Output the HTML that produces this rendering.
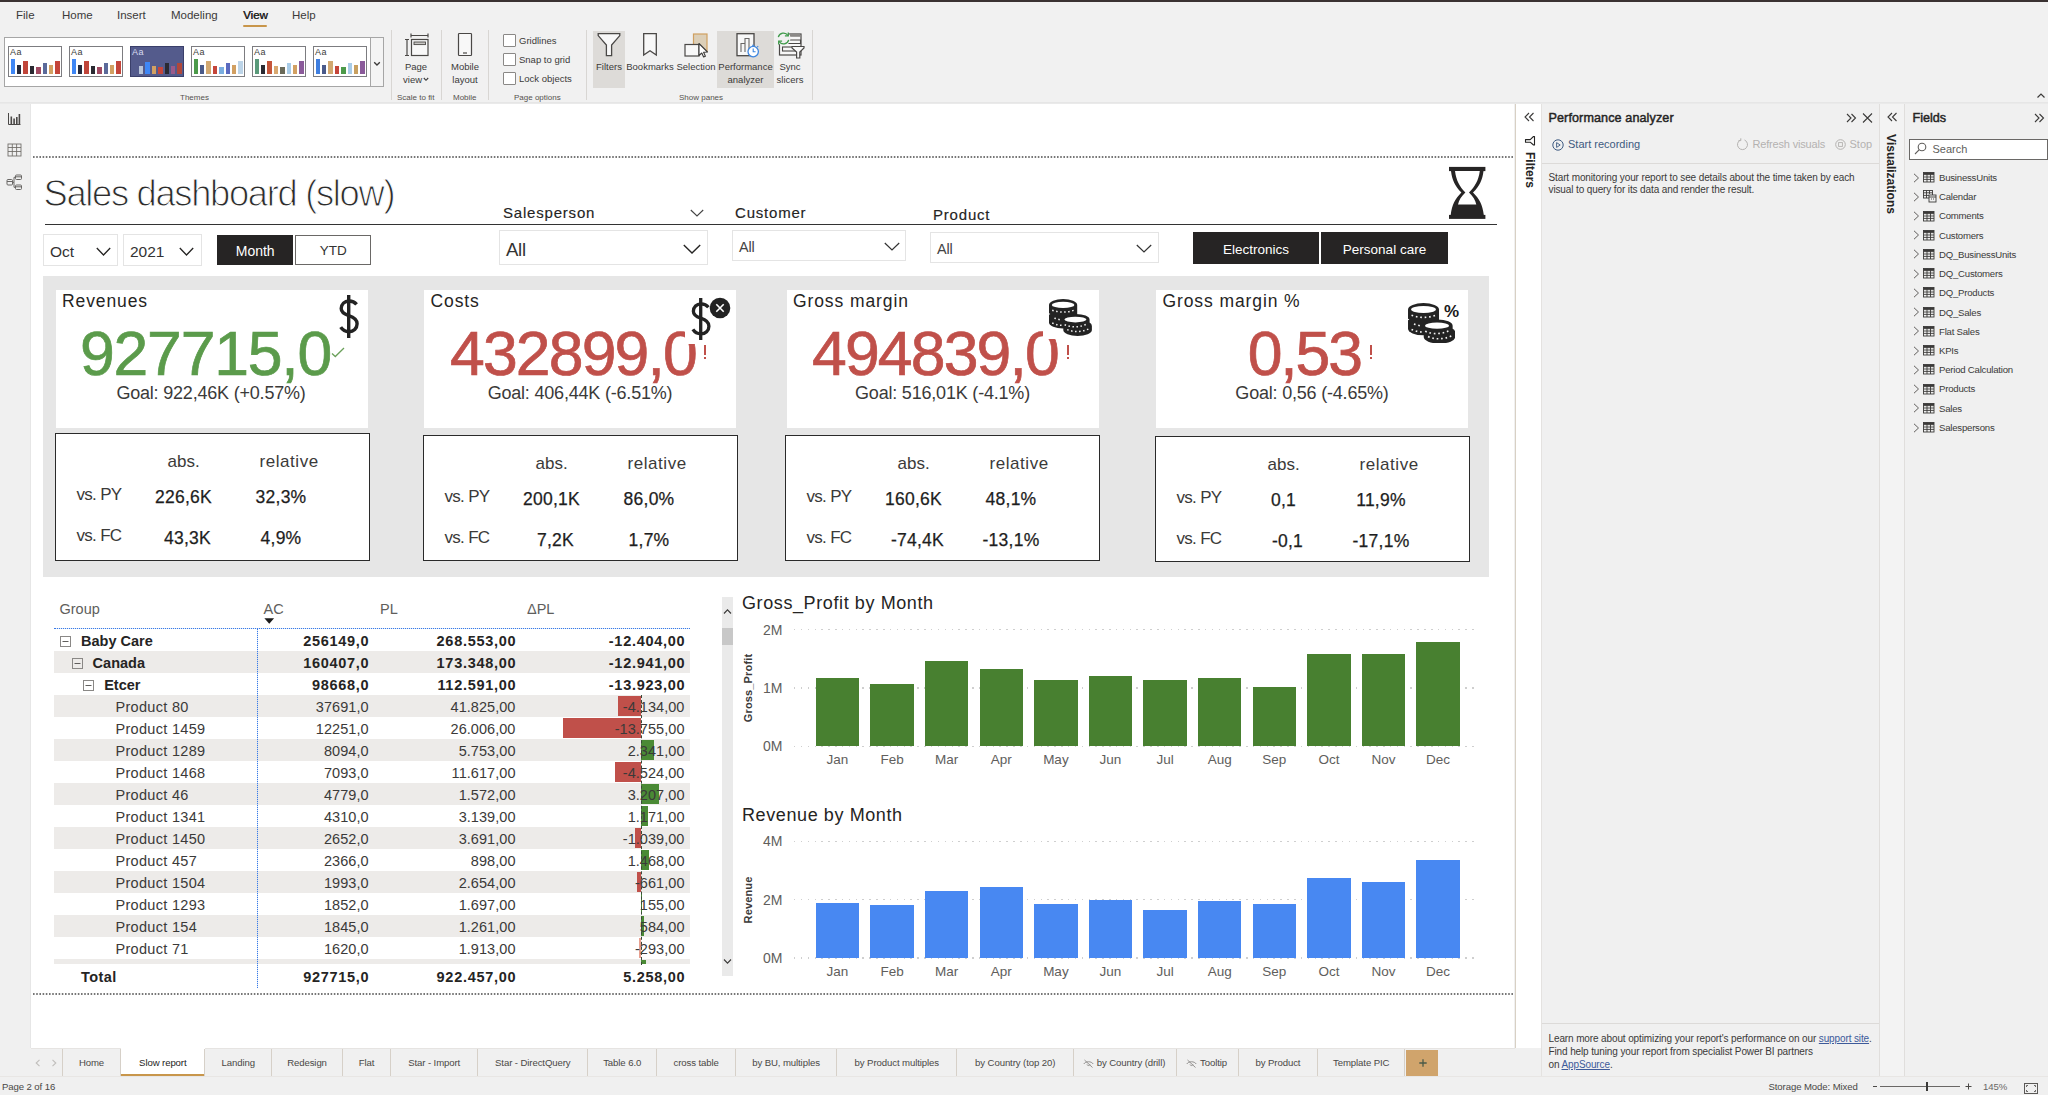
<!DOCTYPE html>
<html>
<head>
<meta charset="utf-8">
<title>Sales dashboard (slow)</title>
<style>
*{box-sizing:border-box;margin:0;padding:0}
html,body{width:2048px;height:1095px;overflow:hidden;background:#f0f0f0;font-family:"Liberation Sans",sans-serif;color:#252423}
.a{position:absolute}
.t{position:absolute;white-space:nowrap;line-height:1}
#ribbon{left:0;top:0;width:2048px;height:103px;background:#f1f1f1}
#topline{left:0;top:0;width:2048px;height:2px;background:#3a3232}
#canvas{left:31px;top:104px;width:1485px;height:944px;background:#fff}
#rightp{left:1514px;top:104px;width:534px;height:973px;background:#f0f0f0}
#tabs{left:31px;top:1048px;width:1483px;height:29px;background:#f0f0f0}
#status{left:0;top:1077px;width:2048px;height:18px;background:#f0f0f0}
.menu{top:9.7px;font-size:11.5px;color:#3b3a39}
.rl{font-size:8px;color:#55524f;top:94px}
.rb{font-size:9px;color:#3b3a39;text-align:center;line-height:13px}
.sep{width:1px;background:#d8d6d3;top:30px;height:70px}
.dot-h{height:0;border-top:2px dotted #8a8886}
</style>
</head>
<body>
<div class="a" id="ribbon"></div>
<div class="a" id="topline"></div>
<div class="a" id="canvas"></div>
<div class="a" id="rightp"></div>
<div class="a" id="tabs"></div>
<div class="a" id="status"></div>
<div class="t menu" style="left:16px">File</div>
<div class="t menu" style="left:62px">Home</div>
<div class="t menu" style="left:117px">Insert</div>
<div class="t menu" style="left:171px">Modeling</div>
<div class="t menu" style="left:243px;color:#252423;text-shadow:0.4px 0 0 #252423">View</div>
<div class="t menu" style="left:292px">Help</div>
<div class="a" style="left:243px;top:25px;width:24px;height:2px;background:#c8964b;border-radius:1px"></div>
<div class="a" style="left:4px;top:37px;width:380px;height:50px;background:#fff;border:1px solid #a6a6a6"></div>
<div class="a" style="left:370px;top:37px;width:14px;height:50px;background:#f4f4f4;border:1px solid #a6a6a6"></div>
<svg class="a" style="left:373px;top:61px" width="8" height="6" viewBox="0 0 8 6"><path d="M1.2 1.2 L4 4 L6.8 1.2" fill="none" stroke="#3b3a39" stroke-width="1.3"/></svg>
<div class="a" style="left:8px;top:46px;width:54px;height:31px;background:#fff;border:1px solid #7c7c80"></div>
<div class="t" style="left:10px;top:48px;font-size:9px;letter-spacing:0.4px;color:#3b3a39">Aa</div>
<div class="a" style="left:10.5px;top:58.5px;width:4.5px;height:15px;background:#3f87f5"></div>
<div class="a" style="left:16.9px;top:64.5px;width:4.5px;height:9px;background:#262a3c"></div>
<div class="a" style="left:23.3px;top:60.5px;width:4.5px;height:13px;background:#c0453a"></div>
<div class="a" style="left:29.7px;top:65.5px;width:4.5px;height:8px;background:#2a2a32"></div>
<div class="a" style="left:36.1px;top:66.5px;width:4.5px;height:7px;background:#a04a62"></div>
<div class="a" style="left:42.5px;top:62.5px;width:4.5px;height:11px;background:#5b6a9a"></div>
<div class="a" style="left:48.9px;top:64.5px;width:4.5px;height:9px;background:#d2a062"></div>
<div class="a" style="left:55.3px;top:60.5px;width:4.5px;height:13px;background:#c4453a"></div>
<div class="a" style="left:69px;top:46px;width:54px;height:31px;background:#fff;border:1px solid #7c7c80"></div>
<div class="t" style="left:71px;top:48px;font-size:9px;letter-spacing:0.4px;color:#3b3a39">Aa</div>
<div class="a" style="left:71.5px;top:58.5px;width:4.5px;height:15px;background:#3f87f5"></div>
<div class="a" style="left:77.9px;top:64.5px;width:4.5px;height:9px;background:#262a3c"></div>
<div class="a" style="left:84.3px;top:60.5px;width:4.5px;height:13px;background:#c0453a"></div>
<div class="a" style="left:90.7px;top:65.5px;width:4.5px;height:8px;background:#2a2a32"></div>
<div class="a" style="left:97.1px;top:66.5px;width:4.5px;height:7px;background:#a04a62"></div>
<div class="a" style="left:103.5px;top:62.5px;width:4.5px;height:11px;background:#5b6a9a"></div>
<div class="a" style="left:109.9px;top:64.5px;width:4.5px;height:9px;background:#d2a062"></div>
<div class="a" style="left:116.3px;top:60.5px;width:4.5px;height:13px;background:#c4453a"></div>
<div class="a" style="left:130px;top:46px;width:54px;height:31px;background:#545b8c;border:1px solid #3a3f6a"></div>
<div class="t" style="left:132px;top:48px;font-size:9px;letter-spacing:0.4px;color:#d8dcf0">Aa</div>
<div class="a" style="left:138.9px;top:65.5px;width:4.5px;height:8px;background:#b8c4d8"></div>
<div class="a" style="left:145.3px;top:61.5px;width:4.5px;height:12px;background:#3f87f5"></div>
<div class="a" style="left:151.7px;top:65.5px;width:4.5px;height:8px;background:#d2a062"></div>
<div class="a" style="left:158.1px;top:66.5px;width:4.5px;height:7px;background:#c4453a"></div>
<div class="a" style="left:164.5px;top:62.5px;width:4.5px;height:11px;background:#2a2a32"></div>
<div class="a" style="left:170.9px;top:65.5px;width:4.5px;height:8px;background:#9a5a8a"></div>
<div class="a" style="left:177.3px;top:62.5px;width:4.5px;height:11px;background:#b0483a"></div>
<div class="a" style="left:191px;top:46px;width:54px;height:31px;background:#fff;border:1px solid #7c7c80"></div>
<div class="t" style="left:193px;top:48px;font-size:9px;letter-spacing:0.4px;color:#3b3a39">Aa</div>
<div class="a" style="left:193.5px;top:58.5px;width:4.5px;height:15px;background:#4c9a4a"></div>
<div class="a" style="left:199.9px;top:64.5px;width:4.5px;height:9px;background:#4a5a8a"></div>
<div class="a" style="left:206.3px;top:60.5px;width:4.5px;height:13px;background:#d2a870"></div>
<div class="a" style="left:212.7px;top:65.5px;width:4.5px;height:8px;background:#c4453a"></div>
<div class="a" style="left:219.1px;top:66.5px;width:4.5px;height:7px;background:#7aaee0"></div>
<div class="a" style="left:225.5px;top:62.5px;width:4.5px;height:11px;background:#5b6ac0"></div>
<div class="a" style="left:231.9px;top:64.5px;width:4.5px;height:9px;background:#d2a062"></div>
<div class="a" style="left:238.3px;top:60.5px;width:4.5px;height:13px;background:#bcd4e8"></div>
<div class="a" style="left:252px;top:46px;width:54px;height:31px;background:#fff;border:1px solid #7c7c80"></div>
<div class="t" style="left:254px;top:48px;font-size:9px;letter-spacing:0.4px;color:#3b3a39">Aa</div>
<div class="a" style="left:254.5px;top:58.5px;width:4.5px;height:15px;background:#5a9a7a"></div>
<div class="a" style="left:260.9px;top:64.5px;width:4.5px;height:9px;background:#2a2a32"></div>
<div class="a" style="left:267.3px;top:60.5px;width:4.5px;height:13px;background:#c4553a"></div>
<div class="a" style="left:273.7px;top:65.5px;width:4.5px;height:8px;background:#d8a870"></div>
<div class="a" style="left:280.1px;top:66.5px;width:4.5px;height:7px;background:#6a6a5a"></div>
<div class="a" style="left:286.5px;top:62.5px;width:4.5px;height:11px;background:#a8cce8"></div>
<div class="a" style="left:292.9px;top:64.5px;width:4.5px;height:9px;background:#d2a062"></div>
<div class="a" style="left:299.3px;top:60.5px;width:4.5px;height:13px;background:#8a5a9a"></div>
<div class="a" style="left:313px;top:46px;width:54px;height:31px;background:#fff;border:1px solid #7c7c80"></div>
<div class="t" style="left:315px;top:48px;font-size:9px;letter-spacing:0.4px;color:#3b3a39">Aa</div>
<div class="a" style="left:315.5px;top:58.5px;width:4.5px;height:15px;background:#3f7fe0"></div>
<div class="a" style="left:321.9px;top:64.5px;width:4.5px;height:9px;background:#4a5a8a"></div>
<div class="a" style="left:328.3px;top:60.5px;width:4.5px;height:13px;background:#d2a870"></div>
<div class="a" style="left:334.7px;top:65.5px;width:4.5px;height:8px;background:#c4453a"></div>
<div class="a" style="left:341.1px;top:66.5px;width:4.5px;height:7px;background:#4c9a4a"></div>
<div class="a" style="left:347.5px;top:62.5px;width:4.5px;height:11px;background:#a8cce8"></div>
<div class="a" style="left:353.9px;top:64.5px;width:4.5px;height:9px;background:#c8a060"></div>
<div class="a" style="left:360.3px;top:60.5px;width:4.5px;height:13px;background:#8a5a9a"></div>
<div class="t rl" style="left:180px">Themes</div>
<div class="a sep" style="left:391px"></div>
<div class="a sep" style="left:441px"></div>
<div class="a sep" style="left:488px"></div>
<div class="a sep" style="left:586px"></div>
<div class="a sep" style="left:812px"></div>
<svg class="a" style="left:404px;top:32px" width="26" height="26" viewBox="0 0 26 26" fill="none" stroke="#4a4846" stroke-width="1.2">
<path d="M7 3.5 H24 M7 1.5 V5.5 M24 1.5 V5.5"/>
<path d="M1 7.5 H5 M1 23.5 H5 M3 7.5 V23.5"/>
<rect x="7.5" y="7.5" width="16.5" height="16" fill="#f8f8f8"/>
<rect x="10" y="10" width="11.5" height="2.6" fill="#c8c6c4" stroke-width="0.9"/>
</svg>
<div class="t rb" style="left:396px;top:60px;width:40px;font-size:9.5px">Page<br>view&#8202;<svg width="6" height="5" viewBox="0 0 6 5" style="vertical-align:1px"><path d="M0.8 1 L3 3.3 L5.2 1" fill="none" stroke="#3b3a39" stroke-width="1.1"/></svg></div>
<svg class="a" style="left:457px;top:32px" width="16" height="26" viewBox="0 0 16 26" fill="none" stroke="#4a4846" stroke-width="1.2">
<rect x="1.5" y="1.5" width="13" height="22" rx="0.8" fill="#f8f8f8"/><path d="M6 21 H10"/></svg>
<div class="t rb" style="left:445px;top:60px;width:40px;font-size:9.5px">Mobile<br>layout</div>
<div class="a" style="left:503px;top:34px;width:13px;height:13px;background:#fff;border:1px solid #8a8886;border-radius:1px"></div>
<div class="t" style="left:519px;top:36px;font-size:9.5px;color:#3b3a39">Gridlines</div>
<div class="a" style="left:503px;top:53px;width:13px;height:13px;background:#fff;border:1px solid #8a8886;border-radius:1px"></div>
<div class="t" style="left:519px;top:55px;font-size:9.5px;color:#3b3a39">Snap to grid</div>
<div class="a" style="left:503px;top:72px;width:13px;height:13px;background:#fff;border:1px solid #8a8886;border-radius:1px"></div>
<div class="t" style="left:519px;top:74px;font-size:9.5px;color:#3b3a39">Lock objects</div>
<div class="t rl" style="left:397px">Scale to fit</div>
<div class="t rl" style="left:453px">Mobile</div>
<div class="t rl" style="left:514px">Page options</div>
<div class="t rl" style="left:679px">Show panes</div>
<div class="a" style="left:593px;top:31px;width:32px;height:57px;background:#dddbd8"></div>
<div class="a" style="left:717px;top:31px;width:57px;height:57px;background:#dddbd8"></div>
<svg class="a" style="left:597px;top:32px" width="24" height="26" viewBox="0 0 24 26" fill="#f8f8f8" stroke="#4a4846" stroke-width="1.3" stroke-linejoin="miter">
<path d="M1.2 1.7 H22.8 V3.6 L14.6 13 V23.6 H9.4 V13 L1.2 3.6 Z"/></svg>
<div class="t rb" style="left:589px;top:60px;width:40px;font-size:9.5px">Filters</div>
<svg class="a" style="left:642px;top:32px" width="16" height="26" viewBox="0 0 16 26" fill="#f8f8f8" stroke="#4a4846" stroke-width="1.3">
<path d="M1.7 1.7 H14.3 V23 L8 18.8 L1.7 23 Z"/></svg>
<div class="t rb" style="left:625px;top:60px;width:50px;font-size:9.5px">Bookmarks</div>
<svg class="a" style="left:683px;top:32px" width="28" height="28" viewBox="0 0 28 28">
<rect x="10.5" y="2" width="13.5" height="17" fill="#dccfb8" stroke="#d0a060" stroke-width="1.2"/>
<rect x="2" y="12.5" width="14" height="11.5" fill="#f8f8f8" stroke="#4a4846" stroke-width="1.2"/>
<path d="M16 11.5 L16 23.5 L18.8 21 L20.6 25 L22.4 24.2 L20.6 20.3 L24.5 20 Z" fill="#fff" stroke="#3b3a39" stroke-width="1.1" stroke-linejoin="round"/>
</svg>
<div class="t rb" style="left:671px;top:60px;width:50px;font-size:9.5px">Selection</div>
<svg class="a" style="left:735px;top:32px" width="26" height="28" viewBox="0 0 26 28" fill="none">
<rect x="2" y="1.7" width="17" height="22" fill="#f8f8f8" stroke="#4a4846" stroke-width="1.3"/>
<path d="M6 20 V11.5 H10 V20 M10 20 V6.5 H14 V20" stroke="#6a6866" stroke-width="1.1"/>
<circle cx="18.2" cy="19.6" r="5.2" fill="#fff" stroke="#3f87e0" stroke-width="1.3"/>
<path d="M18.2 16.5 V19.8 H20.6 M17 13.2 H19.4 M22.3 15 L23.2 14.1" stroke="#3f87e0" stroke-width="1.1"/>
</svg>
<div class="t rb" style="left:715px;top:60px;width:61px;font-size:9.5px">Performance<br>analyzer</div>
<svg class="a" style="left:775px;top:31px" width="30" height="30" viewBox="0 0 30 30" fill="none">
<rect x="4.5" y="3" width="21.5" height="21" fill="#f8f8f8" stroke="#4a4846" stroke-width="1.2"/>
<rect x="15" y="3.6" width="10.5" height="2.2" fill="#8a8886"/>
<path d="M13 9 H25.5 V12.5 H13" stroke="#4a4846" stroke-width="1.1"/>
<rect x="7.5" y="16" width="13" height="4" stroke="#4a4846" stroke-width="1.1"/>
<circle cx="8.5" cy="7.5" r="7" fill="#f1f1f1" stroke="none"/>
<path d="M3.3 6.2 A5.4 5.4 0 0 1 13 4.5 M13.7 8.8 A5.4 5.4 0 0 1 4 10.5" stroke="#3f9a4a" stroke-width="1.3"/>
<path d="M13.3 1.5 V4.9 H9.9 M3.7 13.5 V10.1 H7.1" stroke="#3f9a4a" stroke-width="1.3"/>
<path d="M17 15.5 H29 V17 L24.8 21 V27 H21.6 V21 L17 17 Z" fill="#f8f8f8" stroke="#4a4846" stroke-width="1.2"/>
</svg>
<div class="t rb" style="left:770px;top:60px;width:40px;font-size:9.5px">Sync<br>slicers</div>
<svg class="a" style="left:2036px;top:92px" width="10" height="7" viewBox="0 0 10 7"><path d="M1.5 5.5 L5 2 L8.5 5.5" fill="none" stroke="#3b3a39" stroke-width="1.2"/></svg>
<div class="a" style="left:0;top:102px;width:2048px;height:2px;background:linear-gradient(#e4e4e4,#ececec)"></div>
<!--SIDEBAR-->
<svg class="a" style="left:7px;top:111px" width="16" height="16" viewBox="0 0 16 16" fill="none" stroke="#4a4846" stroke-width="1">
<path d="M1.5 2 V13.5 H13.5"/><rect x="3.5" y="5.5" width="1.6" height="7.5" fill="#4a4846" stroke="none"/><rect x="6.3" y="7.5" width="1.6" height="5.5" fill="#4a4846" stroke="none"/><rect x="9" y="6" width="1.6" height="7" fill="#4a4846" stroke="none"/><rect x="11.6" y="3" width="1.6" height="10" fill="#4a4846" stroke="none"/></svg>
<svg class="a" style="left:7px;top:143px" width="15" height="14" viewBox="0 0 15 14" fill="none" stroke="#6e6a66" stroke-width="0.85">
<rect x="1" y="1" width="13" height="12"/><path d="M1 4.5 H14 M1 8.5 H14 M5.3 1 V13 M9.6 1 V13"/></svg>
<svg class="a" style="left:6px;top:174px" width="17" height="17" viewBox="0 0 17 17" fill="none" stroke="#6a6866" stroke-width="1">
<rect x="1" y="5.5" width="5.5" height="5.5" rx="1"/><rect x="9.5" y="1" width="6" height="4.5" rx="1"/><rect x="9.5" y="11" width="6" height="4.5" rx="1"/><path d="M6.5 8.3 H8 V3.3 H9.5 M8 8.3 V13.3 H9.5 M1 7.5 H6.5 M9.5 2.8 H15.5 M9.5 12.8 H15.5"/></svg>
<div class="a" style="left:30px;top:104px;width:1px;height:944px;background:#e6e6e6"></div>
<div class="a" style="left:1515px;top:104px;width:1px;height:944px;background:#d8d0c4"></div>
<div class="a" style="left:1516px;top:104px;width:25px;height:944px;background:#fff"></div>
<svg class="a" style="left:33px;top:156.0px" width="1481" height="2" viewBox="0 0 1481 2"><line x1="0" y1="1" x2="1481" y2="1" stroke="#4a4a4a" stroke-width="1.7" stroke-dasharray="1.6 1.6"/></svg>
<svg class="a" style="left:33px;top:993.0px" width="1481" height="2" viewBox="0 0 1481 2"><line x1="0" y1="1" x2="1481" y2="1" stroke="#4a4a4a" stroke-width="1.7" stroke-dasharray="1.6 1.6"/></svg>
<div class="t" style="left:43.5px;top:176.3px;font-size:36.3px;color:#2c2c2c;letter-spacing:-1.3px;-webkit-text-stroke:1px #fff">Sales dashboard (slow)</div>
<div class="a" style="left:45px;top:223.6px;width:1452px;height:1.6px;background:#333"></div>
<div class="a" style="left:43px;top:234px;width:75px;height:32px;background:#fff;border:1px solid #e4e4e4"></div>
<div class="t" style="left:50px;top:244px;font-size:15.5px;color:#333">Oct</div>
<svg class="a" style="left:96px;top:247px" width="15" height="10" viewBox="0 0 15 10"><path d="M0.8 1 L7.5 8 L14.2 1" fill="none" stroke="#252423" stroke-width="1.3"/></svg>
<div class="a" style="left:123px;top:234px;width:79px;height:32px;background:#fff;border:1px solid #e4e4e4"></div>
<div class="t" style="left:130px;top:244px;font-size:15.5px;color:#333">2021</div>
<svg class="a" style="left:179px;top:247px" width="15" height="10" viewBox="0 0 15 10"><path d="M0.8 1 L7.5 8 L14.2 1" fill="none" stroke="#252423" stroke-width="1.3"/></svg>
<div class="a" style="left:217.2px;top:235px;width:76px;height:30px;background:#262424;color:#fff;font-size:14px;text-align:center;line-height:32px">Month</div>
<div class="a" style="left:295.2px;top:235px;width:76px;height:30px;background:#fff;border:1.5px solid #6a6866;color:#333;font-size:13.5px;text-align:center;line-height:29px">YTD</div>
<div class="t" style="left:503px;top:205px;font-size:15px;letter-spacing:0.8px;color:#252423;-webkit-text-stroke:0.15px #252423">Salesperson</div>
<svg class="a" style="left:690px;top:209px" width="14" height="9" viewBox="0 0 14 9"><path d="M0.8 1 L7.0 7 L13.2 1" fill="none" stroke="#444" stroke-width="1.1"/></svg>
<div class="t" style="left:735px;top:205px;font-size:15px;letter-spacing:0.8px;color:#252423;-webkit-text-stroke:0.15px #252423">Customer</div>
<div class="t" style="left:933px;top:207px;font-size:15px;letter-spacing:0.8px;color:#252423;-webkit-text-stroke:0.15px #252423">Product</div>
<div class="a" style="left:499px;top:230px;width:209px;height:35px;background:#fff;border:1px solid #e4e4e4"></div>
<div class="t" style="left:506.0px;top:240.9px;font-size:18.6px;color:#333;letter-spacing:-0.3px">All</div>
<svg class="a" style="left:683px;top:244px" width="18" height="11" viewBox="0 0 18 11"><path d="M0.8 1 L9.0 9 L17.2 1" fill="none" stroke="#252423" stroke-width="1.4"/></svg>
<div class="a" style="left:732px;top:230px;width:174px;height:31px;background:#fff;border:1px solid #e4e4e4"></div>
<div class="t" style="left:739.0px;top:240.2px;font-size:14.4px;color:#444;letter-spacing:-0.2px">All</div>
<svg class="a" style="left:884px;top:242px" width="16" height="10" viewBox="0 0 16 10"><path d="M0.8 1 L8.0 8 L15.2 1" fill="none" stroke="#333" stroke-width="1.2"/></svg>
<div class="a" style="left:930px;top:232px;width:229px;height:31px;background:#fff;border:1px solid #e4e4e4"></div>
<div class="t" style="left:937.0px;top:242.2px;font-size:14.4px;color:#444;letter-spacing:-0.2px">All</div>
<svg class="a" style="left:1136px;top:244px" width="16" height="10" viewBox="0 0 16 10"><path d="M0.8 1 L8.0 8 L15.2 1" fill="none" stroke="#333" stroke-width="1.2"/></svg>
<div class="a" style="left:1193px;top:232px;width:126px;height:32px;background:#262424;color:#fff;font-size:13.5px;text-align:center;line-height:35px">Electronics</div>
<div class="a" style="left:1321px;top:232px;width:127px;height:32px;background:#262424;color:#fff;font-size:13.5px;text-align:center;line-height:35px">Personal care</div>
<svg class="a" style="left:1448px;top:166px" width="40" height="54" viewBox="0 0 40 54">
<rect x="1" y="0.9" width="36.4" height="4.2" fill="#262424"/>
<rect x="1" y="48.9" width="36.4" height="4" fill="#262424"/>
<path d="M3 5 C4 14 7 20 13.4 26.6 C7 33 4 39 2.7 49 H35.8 C34.5 39 31.5 33 25 26.6 C31.5 20 34.5 14 35.5 5 Z" fill="#262424"/>
<path d="M7 5 H31.8 C30.5 14.5 27 20.5 21 26.6 C25.2 30.6 27.2 34 28.3 38.6 H10 C11.1 34 13.1 30.6 17.4 26.6 C11.5 20.5 8.3 14.5 7 5 Z" fill="#fff"/>
</svg>
<div class="a" style="left:43px;top:276px;width:1446.3px;height:300.7px;background:#e6e6e6"></div>
<div class="a" style="left:55.5px;top:289.5px;width:312px;height:138.5px;background:#fff"></div>
<div class="t" style="left:62.0px;top:293.2px;font-size:17.5px;color:#252423;letter-spacing:0.9px">Revenues</div>
<div class="t" style="left:80.0px;top:321.5px;font-size:62.5px;color:#5b9b4b;letter-spacing:-1.2px;-webkit-text-stroke:0.7px #5b9b4b">927715,0</div>
<div class="t" style="left:11.0px;top:383.8px;font-size:18px;color:#3b3a39;letter-spacing:-0.2px;width:400px;text-align:center">Goal: 922,46K (+0.57%)</div>
<svg class="a" style="left:331px;top:347px" width="14" height="11" viewBox="0 0 14 11"><path d="M1 6.5 L4.3 9.5 L13 1" fill="none" stroke="#6aa05a" stroke-width="1.3"/></svg>
<div class="a" style="left:424px;top:289.5px;width:312px;height:138.5px;background:#fff"></div>
<div class="t" style="left:430.5px;top:293.2px;font-size:17.5px;color:#252423;letter-spacing:0.9px">Costs</div>
<div class="t" style="left:450.0px;top:321.5px;font-size:62.5px;color:#c0504a;letter-spacing:-1.85px;-webkit-text-stroke:0.7px #c0504a">432899,0</div>
<div class="a" style="left:685.3px;top:290px;width:50.200000000000045px;height:54.30000000000001px;background:#fff"></div>
<div class="t" style="left:380.0px;top:383.8px;font-size:18px;color:#3b3a39;letter-spacing:-0.2px;width:400px;text-align:center">Goal: 406,44K (-6.51%)</div>
<div class="a" style="left:704px;top:345px;width:1.5px;height:9.5px;background:#c0504a"></div><div class="a" style="left:704px;top:357px;width:1.5px;height:2px;background:#c0504a"></div>
<div class="a" style="left:786.5px;top:289.5px;width:312px;height:138.5px;background:#fff"></div>
<div class="t" style="left:793.0px;top:293.2px;font-size:17.5px;color:#252423;letter-spacing:0.9px">Gross margin</div>
<div class="t" style="left:812.0px;top:321.5px;font-size:62.5px;color:#c0504a;letter-spacing:-1.85px;-webkit-text-stroke:0.7px #c0504a">494839,0</div>
<div class="a" style="left:1042.5px;top:290px;width:55.5px;height:49.39999999999998px;background:#fff"></div>
<div class="t" style="left:742.5px;top:383.8px;font-size:18px;color:#3b3a39;letter-spacing:-0.2px;width:400px;text-align:center">Goal: 516,01K (-4.1%)</div>
<div class="a" style="left:1067px;top:345px;width:1.5px;height:9.5px;background:#c0504a"></div><div class="a" style="left:1067px;top:357px;width:1.5px;height:2px;background:#c0504a"></div>
<div class="a" style="left:1156px;top:289.5px;width:312px;height:138.5px;background:#fff"></div>
<div class="t" style="left:1162.5px;top:293.2px;font-size:17.5px;color:#252423;letter-spacing:0.9px">Gross margin %</div>
<div class="t" style="left:1247.7px;top:321.5px;font-size:62.5px;color:#c0504a;letter-spacing:-2.1px;-webkit-text-stroke:0.7px #c0504a">0,53</div>
<div class="t" style="left:1112.0px;top:383.8px;font-size:18px;color:#3b3a39;letter-spacing:-0.2px;width:400px;text-align:center">Goal: 0,56 (-4.65%)</div>
<div class="a" style="left:1370px;top:345px;width:1.5px;height:9.5px;background:#c0504a"></div><div class="a" style="left:1370px;top:357px;width:1.5px;height:2px;background:#c0504a"></div>
<div class="a" style="left:704px;top:345px;width:1.5px;height:9.5px;background:#c0504a"></div><div class="a" style="left:704px;top:357px;width:1.5px;height:2px;background:#c0504a"></div>
<svg class="a" style="left:338.5px;top:295px" width="20" height="44" viewBox="0 0 20 44" fill="none" stroke="#222" stroke-width="3.4">
<path d="M9.7 0 V43"/><path d="M17.6 9.4 C15.6 6.9 13 6 10 6 C5.5 6 2.2 9.2 2.2 13.6 C2.2 17.8 5.5 19.3 9.7 20.6 C14.5 22.1 18.1 24 18.1 28.8 C18.1 33.5 14.5 36.7 10 36.7 C6.5 36.7 3.6 35.2 1.7 32.2"/></svg>
<svg class="a" style="left:691px;top:297.6px" width="20" height="43" viewBox="0 0 20 44" fill="none" stroke="#222" stroke-width="3.4">
<path d="M9.7 0 V43"/><path d="M17.6 9.4 C15.6 6.9 13 6 10 6 C5.5 6 2.2 9.2 2.2 13.6 C2.2 17.8 5.5 19.3 9.7 20.6 C14.5 22.1 18.1 24 18.1 28.8 C18.1 33.5 14.5 36.7 10 36.7 C6.5 36.7 3.6 35.2 1.7 32.2"/></svg>
<svg class="a" style="left:709px;top:297px" width="22" height="22" viewBox="0 0 22 22"><circle cx="11" cy="11" r="10.3" fill="#222"/><path d="M7.3 7.3 L14.7 14.7 M14.7 7.3 L7.3 14.7" stroke="#fff" stroke-width="1.6"/></svg>
<svg class="a" style="left:1048.7px;top:299.1px" width="43.0" height="37.2" viewBox="0 0 43 37.2"><path d="M0 5.9 A14.1 5.9 0 0 1 28.2 5.9 V23.5 A14.1 5.9 0 0 1 0 23.5 Z" fill="#232323"/><ellipse cx="14.1" cy="5.9" rx="11.3" ry="3.1" fill="#fff"/><path d="M0 14.3 L1.3 15 L0 15.7 Z" fill="#fff"/><path d="M3.2 11.2 Q14.1 15 25.2 11.2" stroke="#f4f4f4" stroke-width="1.5" stroke-dasharray="1.5 2.55" fill="none"/><path d="M5.4 19.2 L11.5 20.9" stroke="#f4f4f4" stroke-width="1.5" stroke-dasharray="1.5 2.55" fill="none"/><path d="M3.2 24 Q8 26.2 13 26.4" stroke="#f4f4f4" stroke-width="1.5" stroke-dasharray="1.5 2.55" fill="none"/><path d="M13.4 20.7 A13.6 5.8 0 0 1 40.6 20.7 V23.5 Q42.9 24.5 42.9 27 V31 A14.3 5.9 0 0 1 14.3 31 V27 Q13.4 25 13.4 23 Z" fill="#232323"/><ellipse cx="26.4" cy="20.6" rx="11" ry="2.8" fill="#fff"/><path d="M15.6 25.7 Q26.5 30.2 37.6 25.2" stroke="#f4f4f4" stroke-width="1.5" stroke-dasharray="1.5 2.55" fill="none"/><path d="M18.2 30.6 Q28.5 34.8 39.6 30" stroke="#f4f4f4" stroke-width="1.5" stroke-dasharray="1.5 2.55" fill="none"/></svg>
<svg class="a" style="left:1407.9px;top:302.6px" width="47.3" height="40.9" viewBox="0 0 43 37.2"><path d="M0 5.9 A14.1 5.9 0 0 1 28.2 5.9 V23.5 A14.1 5.9 0 0 1 0 23.5 Z" fill="#232323"/><ellipse cx="14.1" cy="5.9" rx="11.3" ry="3.1" fill="#fff"/><path d="M0 14.3 L1.3 15 L0 15.7 Z" fill="#fff"/><path d="M3.2 11.2 Q14.1 15 25.2 11.2" stroke="#f4f4f4" stroke-width="1.5" stroke-dasharray="1.5 2.55" fill="none"/><path d="M5.4 19.2 L11.5 20.9" stroke="#f4f4f4" stroke-width="1.5" stroke-dasharray="1.5 2.55" fill="none"/><path d="M3.2 24 Q8 26.2 13 26.4" stroke="#f4f4f4" stroke-width="1.5" stroke-dasharray="1.5 2.55" fill="none"/><path d="M13.4 20.7 A13.6 5.8 0 0 1 40.6 20.7 V23.5 Q42.9 24.5 42.9 27 V31 A14.3 5.9 0 0 1 14.3 31 V27 Q13.4 25 13.4 23 Z" fill="#232323"/><ellipse cx="26.4" cy="20.6" rx="11" ry="2.8" fill="#fff"/><path d="M15.6 25.7 Q26.5 30.2 37.6 25.2" stroke="#f4f4f4" stroke-width="1.5" stroke-dasharray="1.5 2.55" fill="none"/><path d="M18.2 30.6 Q28.5 34.8 39.6 30" stroke="#f4f4f4" stroke-width="1.5" stroke-dasharray="1.5 2.55" fill="none"/></svg>
<div class="t" style="left:1444.0px;top:303.1px;font-size:17px;color:#1a1a1a;letter-spacing:-1px;font-weight:bold">%</div>
<div class="a" style="left:55px;top:433px;width:314.5px;height:127.5px;background:#fff;border:1.5px solid #2a2a2a"></div>
<div class="t" style="left:167.5px;top:452.6px;font-size:17px;color:#3b3a39">abs.</div>
<div class="t" style="left:259.5px;top:452.6px;font-size:17px;color:#3b3a39;letter-spacing:0.55px">relative</div>
<div class="t" style="left:76.5px;top:485.6px;font-size:17px;color:#3b3a39;letter-spacing:-0.7px">vs. PY</div>
<div class="t" style="left:76.5px;top:527.1px;font-size:17px;color:#3b3a39;letter-spacing:-0.7px">vs. FC</div>
<div class="t" style="left:-16.5px;top:488.7px;font-size:17.5px;color:#1e1e1e;letter-spacing:0.25px;width:400px;text-align:center;-webkit-text-stroke:0.25px #1e1e1e">226,6K</div>
<div class="t" style="left:81.0px;top:488.7px;font-size:17.5px;color:#1e1e1e;letter-spacing:0.25px;width:400px;text-align:center;-webkit-text-stroke:0.25px #1e1e1e">32,3%</div>
<div class="t" style="left:-12.5px;top:529.7px;font-size:17.5px;color:#1e1e1e;letter-spacing:0.25px;width:400px;text-align:center;-webkit-text-stroke:0.25px #1e1e1e">43,3K</div>
<div class="t" style="left:81.0px;top:529.7px;font-size:17.5px;color:#1e1e1e;letter-spacing:0.25px;width:400px;text-align:center;-webkit-text-stroke:0.25px #1e1e1e">4,9%</div>
<div class="a" style="left:423px;top:435px;width:314.5px;height:126px;background:#fff;border:1.5px solid #2a2a2a"></div>
<div class="t" style="left:535.5px;top:454.6px;font-size:17px;color:#3b3a39">abs.</div>
<div class="t" style="left:627.5px;top:454.6px;font-size:17px;color:#3b3a39;letter-spacing:0.55px">relative</div>
<div class="t" style="left:444.5px;top:487.6px;font-size:17px;color:#3b3a39;letter-spacing:-0.7px">vs. PY</div>
<div class="t" style="left:444.5px;top:529.1px;font-size:17px;color:#3b3a39;letter-spacing:-0.7px">vs. FC</div>
<div class="t" style="left:351.5px;top:490.7px;font-size:17.5px;color:#1e1e1e;letter-spacing:0.25px;width:400px;text-align:center;-webkit-text-stroke:0.25px #1e1e1e">200,1K</div>
<div class="t" style="left:449.0px;top:490.7px;font-size:17.5px;color:#1e1e1e;letter-spacing:0.25px;width:400px;text-align:center;-webkit-text-stroke:0.25px #1e1e1e">86,0%</div>
<div class="t" style="left:355.5px;top:531.7px;font-size:17.5px;color:#1e1e1e;letter-spacing:0.25px;width:400px;text-align:center;-webkit-text-stroke:0.25px #1e1e1e">7,2K</div>
<div class="t" style="left:449.0px;top:531.7px;font-size:17.5px;color:#1e1e1e;letter-spacing:0.25px;width:400px;text-align:center;-webkit-text-stroke:0.25px #1e1e1e">1,7%</div>
<div class="a" style="left:785px;top:435px;width:314.5px;height:126px;background:#fff;border:1.5px solid #2a2a2a"></div>
<div class="t" style="left:897.5px;top:454.6px;font-size:17px;color:#3b3a39">abs.</div>
<div class="t" style="left:989.5px;top:454.6px;font-size:17px;color:#3b3a39;letter-spacing:0.55px">relative</div>
<div class="t" style="left:806.5px;top:487.6px;font-size:17px;color:#3b3a39;letter-spacing:-0.7px">vs. PY</div>
<div class="t" style="left:806.5px;top:529.1px;font-size:17px;color:#3b3a39;letter-spacing:-0.7px">vs. FC</div>
<div class="t" style="left:713.5px;top:490.7px;font-size:17.5px;color:#1e1e1e;letter-spacing:0.25px;width:400px;text-align:center;-webkit-text-stroke:0.25px #1e1e1e">160,6K</div>
<div class="t" style="left:811.0px;top:490.7px;font-size:17.5px;color:#1e1e1e;letter-spacing:0.25px;width:400px;text-align:center;-webkit-text-stroke:0.25px #1e1e1e">48,1%</div>
<div class="t" style="left:717.5px;top:531.7px;font-size:17.5px;color:#1e1e1e;letter-spacing:0.25px;width:400px;text-align:center;-webkit-text-stroke:0.25px #1e1e1e">-74,4K</div>
<div class="t" style="left:811.0px;top:531.7px;font-size:17.5px;color:#1e1e1e;letter-spacing:0.25px;width:400px;text-align:center;-webkit-text-stroke:0.25px #1e1e1e">-13,1%</div>
<div class="a" style="left:1155px;top:436px;width:314.5px;height:125.8px;background:#fff;border:1.5px solid #2a2a2a"></div>
<div class="t" style="left:1267.5px;top:455.6px;font-size:17px;color:#3b3a39">abs.</div>
<div class="t" style="left:1359.5px;top:455.6px;font-size:17px;color:#3b3a39;letter-spacing:0.55px">relative</div>
<div class="t" style="left:1176.5px;top:488.6px;font-size:17px;color:#3b3a39;letter-spacing:-0.7px">vs. PY</div>
<div class="t" style="left:1176.5px;top:530.1px;font-size:17px;color:#3b3a39;letter-spacing:-0.7px">vs. FC</div>
<div class="t" style="left:1083.5px;top:491.7px;font-size:17.5px;color:#1e1e1e;letter-spacing:0.25px;width:400px;text-align:center;-webkit-text-stroke:0.25px #1e1e1e">0,1</div>
<div class="t" style="left:1181.0px;top:491.7px;font-size:17.5px;color:#1e1e1e;letter-spacing:0.25px;width:400px;text-align:center;-webkit-text-stroke:0.25px #1e1e1e">11,9%</div>
<div class="t" style="left:1087.5px;top:532.7px;font-size:17.5px;color:#1e1e1e;letter-spacing:0.25px;width:400px;text-align:center;-webkit-text-stroke:0.25px #1e1e1e">-0,1</div>
<div class="t" style="left:1181.0px;top:532.7px;font-size:17.5px;color:#1e1e1e;letter-spacing:0.25px;width:400px;text-align:center;-webkit-text-stroke:0.25px #1e1e1e">-17,1%</div>
<div class="t" style="left:59.5px;top:601.7px;font-size:14.5px;color:#605e5c">Group</div>
<div class="t" style="left:263.5px;top:601.7px;font-size:14.5px;color:#605e5c">AC</div>
<div class="t" style="left:380.0px;top:601.7px;font-size:14.5px;color:#605e5c">PL</div>
<div class="t" style="left:527.0px;top:601.7px;font-size:14.5px;color:#605e5c">&Delta;PL</div>
<svg class="a" style="left:264.3px;top:617.8px" width="10.5" height="6.2" viewBox="0 0 10 6"><path d="M0.3 0.3 H9.7 L5 5.5 Z" fill="#1a1a1a"/></svg>
<svg class="a" style="left:60.0px;top:636px" width="11" height="11" viewBox="0 0 11 11"><rect x="0.5" y="0.5" width="10" height="10" fill="none" stroke="#8a8886"/><path d="M2.5 5.5 H8.5" stroke="#605e5c"/></svg>
<div class="t" style="left:81.0px;top:633.7px;font-size:14.5px;color:#252423;font-weight:bold">Baby Care</div>
<div class="t" style="left:-30.8px;top:633.7px;font-size:14.5px;color:#252423;letter-spacing:0.7px;font-weight:bold;width:400px;text-align:right">256149,0</div>
<div class="t" style="left:116.2px;top:633.7px;font-size:14.5px;color:#252423;letter-spacing:0.7px;font-weight:bold;width:400px;text-align:right">268.553,00</div>
<div class="t" style="left:285.2px;top:633.7px;font-size:14.5px;color:#252423;letter-spacing:0.7px;font-weight:bold;width:400px;text-align:right">-12.404,00</div>
<div class="a" style="left:54px;top:651px;width:636px;height:22px;background:#edebe9"></div>
<svg class="a" style="left:71.7px;top:658px" width="11" height="11" viewBox="0 0 11 11"><rect x="0.5" y="0.5" width="10" height="10" fill="none" stroke="#8a8886"/><path d="M2.5 5.5 H8.5" stroke="#605e5c"/></svg>
<div class="t" style="left:92.6px;top:655.7px;font-size:14.5px;color:#252423;font-weight:bold">Canada</div>
<div class="t" style="left:-30.8px;top:655.7px;font-size:14.5px;color:#252423;letter-spacing:0.7px;font-weight:bold;width:400px;text-align:right">160407,0</div>
<div class="t" style="left:116.2px;top:655.7px;font-size:14.5px;color:#252423;letter-spacing:0.7px;font-weight:bold;width:400px;text-align:right">173.348,00</div>
<div class="t" style="left:285.2px;top:655.7px;font-size:14.5px;color:#252423;letter-spacing:0.7px;font-weight:bold;width:400px;text-align:right">-12.941,00</div>
<svg class="a" style="left:83.4px;top:680px" width="11" height="11" viewBox="0 0 11 11"><rect x="0.5" y="0.5" width="10" height="10" fill="none" stroke="#8a8886"/><path d="M2.5 5.5 H8.5" stroke="#605e5c"/></svg>
<div class="t" style="left:104.2px;top:677.7px;font-size:14.5px;color:#252423;font-weight:bold">Etcer</div>
<div class="t" style="left:-30.8px;top:677.7px;font-size:14.5px;color:#252423;letter-spacing:0.7px;font-weight:bold;width:400px;text-align:right">98668,0</div>
<div class="t" style="left:116.2px;top:677.7px;font-size:14.5px;color:#252423;letter-spacing:0.7px;font-weight:bold;width:400px;text-align:right">112.591,00</div>
<div class="t" style="left:285.2px;top:677.7px;font-size:14.5px;color:#252423;letter-spacing:0.7px;font-weight:bold;width:400px;text-align:right">-13.923,00</div>
<div class="a" style="left:54px;top:695px;width:636px;height:22px;background:#edebe9"></div>
<div class="a" style="left:617.6px;top:696px;width:23.4px;height:20px;background:#c0504a"></div>
<div class="t" style="left:115.5px;top:699.7px;font-size:14.5px;color:#3b3a39;letter-spacing:0.3px">Product 80</div>
<div class="t" style="left:-31.4px;top:699.7px;font-size:14.5px;color:#3b3a39;letter-spacing:0.05px;width:400px;text-align:right">37691,0</div>
<div class="t" style="left:115.5px;top:699.7px;font-size:14.5px;color:#3b3a39;letter-spacing:0.05px;width:400px;text-align:right">41.825,00</div>
<div class="t" style="left:284.5px;top:699.7px;font-size:14.5px;color:#3b3a39;letter-spacing:0.05px;width:400px;text-align:right">-4.134,00</div>
<div class="a" style="left:563.0px;top:718px;width:78.0px;height:20px;background:#c0504a"></div>
<div class="t" style="left:115.5px;top:721.7px;font-size:14.5px;color:#3b3a39;letter-spacing:0.3px">Product 1459</div>
<div class="t" style="left:-31.4px;top:721.7px;font-size:14.5px;color:#3b3a39;letter-spacing:0.05px;width:400px;text-align:right">12251,0</div>
<div class="t" style="left:115.5px;top:721.7px;font-size:14.5px;color:#3b3a39;letter-spacing:0.05px;width:400px;text-align:right">26.006,00</div>
<div class="t" style="left:284.5px;top:721.7px;font-size:14.5px;color:#3b3a39;letter-spacing:0.05px;width:400px;text-align:right">-13.755,00</div>
<div class="a" style="left:54px;top:739px;width:636px;height:22px;background:#edebe9"></div>
<div class="a" style="left:641px;top:740px;width:13.3px;height:20px;background:#4a8a35"></div>
<div class="t" style="left:115.5px;top:743.7px;font-size:14.5px;color:#3b3a39;letter-spacing:0.3px">Product 1289</div>
<div class="t" style="left:-31.4px;top:743.7px;font-size:14.5px;color:#3b3a39;letter-spacing:0.05px;width:400px;text-align:right">8094,0</div>
<div class="t" style="left:115.5px;top:743.7px;font-size:14.5px;color:#3b3a39;letter-spacing:0.05px;width:400px;text-align:right">5.753,00</div>
<div class="t" style="left:284.5px;top:743.7px;font-size:14.5px;color:#3b3a39;letter-spacing:0.05px;width:400px;text-align:right">2.341,00</div>
<div class="a" style="left:615.3px;top:762px;width:25.7px;height:20px;background:#c0504a"></div>
<div class="t" style="left:115.5px;top:765.7px;font-size:14.5px;color:#3b3a39;letter-spacing:0.3px">Product 1468</div>
<div class="t" style="left:-31.4px;top:765.7px;font-size:14.5px;color:#3b3a39;letter-spacing:0.05px;width:400px;text-align:right">7093,0</div>
<div class="t" style="left:115.5px;top:765.7px;font-size:14.5px;color:#3b3a39;letter-spacing:0.05px;width:400px;text-align:right">11.617,00</div>
<div class="t" style="left:284.5px;top:765.7px;font-size:14.5px;color:#3b3a39;letter-spacing:0.05px;width:400px;text-align:right">-4.524,00</div>
<div class="a" style="left:54px;top:783px;width:636px;height:22px;background:#edebe9"></div>
<div class="a" style="left:641px;top:784px;width:18.2px;height:20px;background:#4a8a35"></div>
<div class="t" style="left:115.5px;top:787.7px;font-size:14.5px;color:#3b3a39;letter-spacing:0.3px">Product 46</div>
<div class="t" style="left:-31.4px;top:787.7px;font-size:14.5px;color:#3b3a39;letter-spacing:0.05px;width:400px;text-align:right">4779,0</div>
<div class="t" style="left:115.5px;top:787.7px;font-size:14.5px;color:#3b3a39;letter-spacing:0.05px;width:400px;text-align:right">1.572,00</div>
<div class="t" style="left:284.5px;top:787.7px;font-size:14.5px;color:#3b3a39;letter-spacing:0.05px;width:400px;text-align:right">3.207,00</div>
<div class="a" style="left:641px;top:806px;width:6.6px;height:20px;background:#4a8a35"></div>
<div class="t" style="left:115.5px;top:809.7px;font-size:14.5px;color:#3b3a39;letter-spacing:0.3px">Product 1341</div>
<div class="t" style="left:-31.4px;top:809.7px;font-size:14.5px;color:#3b3a39;letter-spacing:0.05px;width:400px;text-align:right">4310,0</div>
<div class="t" style="left:115.5px;top:809.7px;font-size:14.5px;color:#3b3a39;letter-spacing:0.05px;width:400px;text-align:right">3.139,00</div>
<div class="t" style="left:284.5px;top:809.7px;font-size:14.5px;color:#3b3a39;letter-spacing:0.05px;width:400px;text-align:right">1.171,00</div>
<div class="a" style="left:54px;top:827px;width:636px;height:22px;background:#edebe9"></div>
<div class="a" style="left:635.1px;top:828px;width:5.9px;height:20px;background:#c0504a"></div>
<div class="t" style="left:115.5px;top:831.7px;font-size:14.5px;color:#3b3a39;letter-spacing:0.3px">Product 1450</div>
<div class="t" style="left:-31.4px;top:831.7px;font-size:14.5px;color:#3b3a39;letter-spacing:0.05px;width:400px;text-align:right">2652,0</div>
<div class="t" style="left:115.5px;top:831.7px;font-size:14.5px;color:#3b3a39;letter-spacing:0.05px;width:400px;text-align:right">3.691,00</div>
<div class="t" style="left:284.5px;top:831.7px;font-size:14.5px;color:#3b3a39;letter-spacing:0.05px;width:400px;text-align:right">-1.039,00</div>
<div class="a" style="left:641px;top:850px;width:8.3px;height:20px;background:#4a8a35"></div>
<div class="t" style="left:115.5px;top:853.7px;font-size:14.5px;color:#3b3a39;letter-spacing:0.3px">Product 457</div>
<div class="t" style="left:-31.4px;top:853.7px;font-size:14.5px;color:#3b3a39;letter-spacing:0.05px;width:400px;text-align:right">2366,0</div>
<div class="t" style="left:115.5px;top:853.7px;font-size:14.5px;color:#3b3a39;letter-spacing:0.05px;width:400px;text-align:right">898,00</div>
<div class="t" style="left:284.5px;top:853.7px;font-size:14.5px;color:#3b3a39;letter-spacing:0.05px;width:400px;text-align:right">1.468,00</div>
<div class="a" style="left:54px;top:871px;width:636px;height:22px;background:#edebe9"></div>
<div class="a" style="left:637.3px;top:872px;width:3.7px;height:20px;background:#c0504a"></div>
<div class="t" style="left:115.5px;top:875.7px;font-size:14.5px;color:#3b3a39;letter-spacing:0.3px">Product 1504</div>
<div class="t" style="left:-31.4px;top:875.7px;font-size:14.5px;color:#3b3a39;letter-spacing:0.05px;width:400px;text-align:right">1993,0</div>
<div class="t" style="left:115.5px;top:875.7px;font-size:14.5px;color:#3b3a39;letter-spacing:0.05px;width:400px;text-align:right">2.654,00</div>
<div class="t" style="left:284.5px;top:875.7px;font-size:14.5px;color:#3b3a39;letter-spacing:0.05px;width:400px;text-align:right">-661,00</div>
<div class="a" style="left:641px;top:894px;width:1.2px;height:20px;background:#4a8a35"></div>
<div class="t" style="left:115.5px;top:897.7px;font-size:14.5px;color:#3b3a39;letter-spacing:0.3px">Product 1293</div>
<div class="t" style="left:-31.4px;top:897.7px;font-size:14.5px;color:#3b3a39;letter-spacing:0.05px;width:400px;text-align:right">1852,0</div>
<div class="t" style="left:115.5px;top:897.7px;font-size:14.5px;color:#3b3a39;letter-spacing:0.05px;width:400px;text-align:right">1.697,00</div>
<div class="t" style="left:284.5px;top:897.7px;font-size:14.5px;color:#3b3a39;letter-spacing:0.05px;width:400px;text-align:right">155,00</div>
<div class="a" style="left:54px;top:915px;width:636px;height:22px;background:#edebe9"></div>
<div class="a" style="left:641px;top:916px;width:3.3px;height:20px;background:#4a8a35"></div>
<div class="t" style="left:115.5px;top:919.7px;font-size:14.5px;color:#3b3a39;letter-spacing:0.3px">Product 154</div>
<div class="t" style="left:-31.4px;top:919.7px;font-size:14.5px;color:#3b3a39;letter-spacing:0.05px;width:400px;text-align:right">1845,0</div>
<div class="t" style="left:115.5px;top:919.7px;font-size:14.5px;color:#3b3a39;letter-spacing:0.05px;width:400px;text-align:right">1.261,00</div>
<div class="t" style="left:284.5px;top:919.7px;font-size:14.5px;color:#3b3a39;letter-spacing:0.05px;width:400px;text-align:right">584,00</div>
<div class="a" style="left:639.3px;top:938px;width:1.7px;height:20px;background:#e8a090"></div>
<div class="t" style="left:115.5px;top:941.7px;font-size:14.5px;color:#3b3a39;letter-spacing:0.3px">Product 71</div>
<div class="t" style="left:-31.4px;top:941.7px;font-size:14.5px;color:#3b3a39;letter-spacing:0.05px;width:400px;text-align:right">1620,0</div>
<div class="t" style="left:115.5px;top:941.7px;font-size:14.5px;color:#3b3a39;letter-spacing:0.05px;width:400px;text-align:right">1.913,00</div>
<div class="t" style="left:284.5px;top:941.7px;font-size:14.5px;color:#3b3a39;letter-spacing:0.05px;width:400px;text-align:right">-293,00</div>
<div class="a" style="left:54px;top:959px;width:636px;height:5px;background:#edebe9"></div>
<div class="a" style="left:641px;top:960px;width:5px;height:4px;background:#4a8a35"></div>
<div class="a" style="left:640.5px;top:695px;width:0;height:270px;border-left:1px dashed #3a4a3a"></div>
<div class="t" style="left:81.0px;top:970.2px;font-size:14.5px;color:#252423;letter-spacing:0.4px;font-weight:bold">Total</div>
<div class="t" style="left:-30.8px;top:970.2px;font-size:14.5px;color:#252423;letter-spacing:0.7px;font-weight:bold;width:400px;text-align:right">927715,0</div>
<div class="t" style="left:116.2px;top:970.2px;font-size:14.5px;color:#252423;letter-spacing:0.7px;font-weight:bold;width:400px;text-align:right">922.457,00</div>
<div class="t" style="left:285.2px;top:970.2px;font-size:14.5px;color:#252423;letter-spacing:0.7px;font-weight:bold;width:400px;text-align:right">5.258,00</div>
<div class="a" style="left:54px;top:627.5px;width:636px;height:1.5px;background:#dbe8f8"></div>
<div class="a" style="left:54px;top:627.5px;width:636px;height:0;border-top:1.5px dotted #3a7ae8"></div>
<div class="a" style="left:256.7px;top:629px;width:1.5px;height:359px;background:rgba(120,170,235,0.28)"></div>
<div class="a" style="left:256.7px;top:629px;width:0;height:359px;border-left:1.5px dotted #3a7ae8"></div>
<div class="a" style="left:722px;top:597px;width:10.5px;height:379px;background:#eaeaea"></div>
<div class="a" style="left:722px;top:628px;width:10.5px;height:17px;background:#c8c8c8"></div>
<svg class="a" style="left:723px;top:608px" width="9" height="7" viewBox="0 0 9 7"><path d="M1 5.5 L4.5 1.8 L8 5.5" fill="none" stroke="#3b3a39" stroke-width="1.1"/></svg>
<svg class="a" style="left:723px;top:958px" width="9" height="7" viewBox="0 0 9 7"><path d="M1 1.5 L4.5 5.2 L8 1.5" fill="none" stroke="#3b3a39" stroke-width="1.1"/></svg>
<div class="t" style="left:742.0px;top:593.8px;font-size:18px;color:#252423;letter-spacing:0.6px">Gross_Profit by Month</div>
<div class="a" style="left:794px;top:628.95px;width:684px;height:1.5px;background:repeating-linear-gradient(to right,#cfcfcf 0 1.5px,transparent 1.5px 6.85px)"></div>
<div class="t" style="left:382.5px;top:622.6px;font-size:14px;color:#605e5c;width:400px;text-align:right">2M</div>
<div class="a" style="left:794px;top:687.15px;width:684px;height:1.5px;background:repeating-linear-gradient(to right,#cfcfcf 0 1.5px,transparent 1.5px 6.85px)"></div>
<div class="t" style="left:382.5px;top:680.8px;font-size:14px;color:#605e5c;width:400px;text-align:right">1M</div>
<div class="a" style="left:794px;top:745.55px;width:684px;height:1.5px;background:repeating-linear-gradient(to right,#cfcfcf 0 1.5px,transparent 1.5px 6.85px)"></div>
<div class="t" style="left:382.5px;top:739.2px;font-size:14px;color:#605e5c;width:400px;text-align:right">0M</div>
<div class="a" style="left:815.8px;top:678px;width:43.4px;height:68.2px;background:#488030"></div>
<div class="t" style="left:637.5px;top:753.4px;font-size:13.5px;color:#605e5c;width:400px;text-align:center">Jan</div>
<div class="a" style="left:870.4px;top:684px;width:43.4px;height:62.2px;background:#488030"></div>
<div class="t" style="left:692.1px;top:753.4px;font-size:13.5px;color:#605e5c;width:400px;text-align:center">Feb</div>
<div class="a" style="left:925.0px;top:661px;width:43.4px;height:85.2px;background:#488030"></div>
<div class="t" style="left:746.7px;top:753.4px;font-size:13.5px;color:#605e5c;width:400px;text-align:center">Mar</div>
<div class="a" style="left:979.6px;top:668.7px;width:43.4px;height:77.5px;background:#488030"></div>
<div class="t" style="left:801.3px;top:753.4px;font-size:13.5px;color:#605e5c;width:400px;text-align:center">Apr</div>
<div class="a" style="left:1034.2px;top:680px;width:43.4px;height:66.2px;background:#488030"></div>
<div class="t" style="left:855.9px;top:753.4px;font-size:13.5px;color:#605e5c;width:400px;text-align:center">May</div>
<div class="a" style="left:1088.8px;top:675.7px;width:43.4px;height:70.5px;background:#488030"></div>
<div class="t" style="left:910.5px;top:753.4px;font-size:13.5px;color:#605e5c;width:400px;text-align:center">Jun</div>
<div class="a" style="left:1143.4px;top:680px;width:43.4px;height:66.2px;background:#488030"></div>
<div class="t" style="left:965.1px;top:753.4px;font-size:13.5px;color:#605e5c;width:400px;text-align:center">Jul</div>
<div class="a" style="left:1198.0px;top:677.6px;width:43.4px;height:68.6px;background:#488030"></div>
<div class="t" style="left:1019.7px;top:753.4px;font-size:13.5px;color:#605e5c;width:400px;text-align:center">Aug</div>
<div class="a" style="left:1252.6px;top:687px;width:43.4px;height:59.2px;background:#488030"></div>
<div class="t" style="left:1074.3px;top:753.4px;font-size:13.5px;color:#605e5c;width:400px;text-align:center">Sep</div>
<div class="a" style="left:1307.2px;top:653.8px;width:43.4px;height:92.4px;background:#488030"></div>
<div class="t" style="left:1128.9px;top:753.4px;font-size:13.5px;color:#605e5c;width:400px;text-align:center">Oct</div>
<div class="a" style="left:1361.8px;top:654.2px;width:43.4px;height:92.0px;background:#488030"></div>
<div class="t" style="left:1183.5px;top:753.4px;font-size:13.5px;color:#605e5c;width:400px;text-align:center">Nov</div>
<div class="a" style="left:1416.4px;top:642px;width:43.4px;height:104.2px;background:#488030"></div>
<div class="t" style="left:1238.1px;top:753.4px;font-size:13.5px;color:#605e5c;width:400px;text-align:center">Dec</div>
<div class="t" style="left:647.5px;top:680.5px;width:200px;height:14px;line-height:14px;text-align:center;font-size:11px;letter-spacing:0.15px;color:#3b3a39;font-weight:bold;transform:rotate(-90deg)">Gross_Profit</div>
<div class="t" style="left:742.0px;top:805.8px;font-size:18px;color:#252423;letter-spacing:0.6px">Revenue by Month</div>
<div class="a" style="left:794px;top:840.55px;width:684px;height:1.5px;background:repeating-linear-gradient(to right,#cfcfcf 0 1.5px,transparent 1.5px 6.85px)"></div>
<div class="t" style="left:382.5px;top:834.2px;font-size:14px;color:#605e5c;width:400px;text-align:right">4M</div>
<div class="a" style="left:794px;top:898.95px;width:684px;height:1.5px;background:repeating-linear-gradient(to right,#cfcfcf 0 1.5px,transparent 1.5px 6.85px)"></div>
<div class="t" style="left:382.5px;top:892.6px;font-size:14px;color:#605e5c;width:400px;text-align:right">2M</div>
<div class="a" style="left:794px;top:957.05px;width:684px;height:1.5px;background:repeating-linear-gradient(to right,#cfcfcf 0 1.5px,transparent 1.5px 6.85px)"></div>
<div class="t" style="left:382.5px;top:950.7px;font-size:14px;color:#605e5c;width:400px;text-align:right">0M</div>
<div class="a" style="left:815.8px;top:903px;width:43.4px;height:54.7px;background:#4888f2"></div>
<div class="t" style="left:637.5px;top:965.2px;font-size:13.5px;color:#605e5c;width:400px;text-align:center">Jan</div>
<div class="a" style="left:870.4px;top:905px;width:43.4px;height:52.7px;background:#4888f2"></div>
<div class="t" style="left:692.1px;top:965.2px;font-size:13.5px;color:#605e5c;width:400px;text-align:center">Feb</div>
<div class="a" style="left:925.0px;top:890.8px;width:43.4px;height:66.9px;background:#4888f2"></div>
<div class="t" style="left:746.7px;top:965.2px;font-size:13.5px;color:#605e5c;width:400px;text-align:center">Mar</div>
<div class="a" style="left:979.6px;top:887.2px;width:43.4px;height:70.5px;background:#4888f2"></div>
<div class="t" style="left:801.3px;top:965.2px;font-size:13.5px;color:#605e5c;width:400px;text-align:center">Apr</div>
<div class="a" style="left:1034.2px;top:904.2px;width:43.4px;height:53.5px;background:#4888f2"></div>
<div class="t" style="left:855.9px;top:965.2px;font-size:13.5px;color:#605e5c;width:400px;text-align:center">May</div>
<div class="a" style="left:1088.8px;top:899.9px;width:43.4px;height:57.8px;background:#4888f2"></div>
<div class="t" style="left:910.5px;top:965.2px;font-size:13.5px;color:#605e5c;width:400px;text-align:center">Jun</div>
<div class="a" style="left:1143.4px;top:910px;width:43.4px;height:47.7px;background:#4888f2"></div>
<div class="t" style="left:965.1px;top:965.2px;font-size:13.5px;color:#605e5c;width:400px;text-align:center">Jul</div>
<div class="a" style="left:1198.0px;top:901.4px;width:43.4px;height:56.3px;background:#4888f2"></div>
<div class="t" style="left:1019.7px;top:965.2px;font-size:13.5px;color:#605e5c;width:400px;text-align:center">Aug</div>
<div class="a" style="left:1252.6px;top:904.2px;width:43.4px;height:53.5px;background:#4888f2"></div>
<div class="t" style="left:1074.3px;top:965.2px;font-size:13.5px;color:#605e5c;width:400px;text-align:center">Sep</div>
<div class="a" style="left:1307.2px;top:878px;width:43.4px;height:79.7px;background:#4888f2"></div>
<div class="t" style="left:1128.9px;top:965.2px;font-size:13.5px;color:#605e5c;width:400px;text-align:center">Oct</div>
<div class="a" style="left:1361.8px;top:882.4px;width:43.4px;height:75.3px;background:#4888f2"></div>
<div class="t" style="left:1183.5px;top:965.2px;font-size:13.5px;color:#605e5c;width:400px;text-align:center">Nov</div>
<div class="a" style="left:1416.4px;top:859.8px;width:43.4px;height:97.9px;background:#4888f2"></div>
<div class="t" style="left:1238.1px;top:965.2px;font-size:13.5px;color:#605e5c;width:400px;text-align:center">Dec</div>
<div class="t" style="left:647.5px;top:892.5px;width:200px;height:14px;line-height:14px;text-align:center;font-size:11px;letter-spacing:0.15px;color:#3b3a39;font-weight:bold;transform:rotate(-90deg)">Revenue</div>
<svg class="a" style="left:1523.5px;top:112px" width="11" height="10" viewBox="0 0 11 10"><path d="M5 1 L1 5 L5 9 M9.5 1 L5.5 5 L9.5 9" fill="none" stroke="#3b3a39" stroke-width="1.1"/></svg>
<svg class="a" style="left:1524px;top:135px" width="12" height="12" viewBox="0 0 12 12"><path d="M10.5 1.5 V10 H9.5 L6.2 7.2 H1.5 V4.6 H6.2 L9.5 1.5 Z" fill="none" stroke="#252423" stroke-width="1.1" stroke-linejoin="round"/></svg>
<div class="t" style="left:1480px;top:163px;width:100px;height:14px;line-height:14px;text-align:center;font-size:12px;font-weight:bold;color:#252423;transform:rotate(90deg)">Filters</div>
<div class="a" style="left:1541px;top:104px;width:1px;height:973px;background:#e4e2e0"></div>
<div class="t" style="left:1548.5px;top:112.3px;font-size:12.6px;color:#252423;letter-spacing:0.1px;-webkit-text-stroke:0.45px #252423">Performance analyzer</div>
<svg class="a" style="left:1846px;top:112.5px" width="11" height="10" viewBox="0 0 11 10"><path d="M1 1 L5 5 L1 9 M5.5 1 L9.5 5 L5.5 9" fill="none" stroke="#3b3a39" stroke-width="1.1"/></svg>
<svg class="a" style="left:1862px;top:112.5px" width="11" height="10" viewBox="0 0 11 10"><path d="M1 0.5 L10 9.5 M10 0.5 L1 9.5" fill="none" stroke="#3b3a39" stroke-width="1.1"/></svg>
<svg class="a" style="left:1552px;top:138.5px" width="12" height="12" viewBox="0 0 12 12"><circle cx="6" cy="6" r="5.2" fill="none" stroke="#3d5a80" stroke-width="1"/><path d="M4.6 3.6 L8.2 6 L4.6 8.4 Z" fill="none" stroke="#3d5a80" stroke-width="0.9"/></svg>
<div class="t" style="left:1568.0px;top:138.7px;font-size:11px;color:#3d5a80">Start recording</div>
<svg class="a" style="left:1736px;top:138px" width="13" height="13" viewBox="0 0 13 13"><path d="M4.5 2 A5 5 0 1 0 8.5 2" fill="none" stroke="#b4b2b0" stroke-width="1"/><path d="M4.8 0.3 V2.6 H2.5" fill="none" stroke="#b4b2b0" stroke-width="1"/></svg>
<div class="t" style="left:1752.5px;top:138.7px;font-size:11px;color:#b4b2b0;letter-spacing:-0.18px">Refresh visuals</div>
<svg class="a" style="left:1834.5px;top:139px" width="11" height="11" viewBox="0 0 11 11"><circle cx="5.5" cy="5.5" r="4.8" fill="none" stroke="#b4b2b0" stroke-width="1"/><rect x="3.6" y="3.6" width="3.8" height="3.8" fill="none" stroke="#b4b2b0" stroke-width="0.9"/></svg>
<div class="t" style="left:1849.5px;top:138.7px;font-size:11px;color:#b4b2b0">Stop</div>
<div class="a" style="left:1542px;top:162.5px;width:337px;height:1px;background:#dcdad8"></div>
<div class="t" style="left:1548.5px;top:172.5px;font-size:10px;color:#3b3a39;letter-spacing:-0.12px">Start monitoring your report to see details about the time taken by each</div>
<div class="t" style="left:1548.5px;top:185.3px;font-size:10px;color:#3b3a39;letter-spacing:-0.12px">visual to query for its data and render the result.</div>
<div class="a" style="left:1542px;top:1023px;width:337px;height:1px;background:#dcdad8"></div>
<div class="t" style="left:1548.5px;top:1033.5px;font-size:10px;color:#3b3a39;letter-spacing:-0.12px">Learn more about optimizing your report's performance on our <span style="color:#3d5a9a;text-decoration:underline">support site</span>.</div>
<div class="t" style="left:1548.5px;top:1046.5px;font-size:10px;color:#3b3a39;letter-spacing:-0.12px">Find help tuning your report from specialist Power BI partners</div>
<div class="t" style="left:1548.5px;top:1059.5px;font-size:10px;color:#3b3a39;letter-spacing:-0.12px">on <span style="color:#3d5a9a;text-decoration:underline">AppSource</span>.</div>
<div class="a" style="left:1879px;top:104px;width:1px;height:973px;background:#e0dedc"></div>
<div class="a" style="left:1880px;top:104px;width:24px;height:973px;background:#f3f3f3"></div>
<div class="a" style="left:1904px;top:104px;width:1px;height:973px;background:#e0dedc"></div>
<svg class="a" style="left:1887px;top:112px" width="11" height="10" viewBox="0 0 11 10"><path d="M5 1 L1 5 L5 9 M9.5 1 L5.5 5 L9.5 9" fill="none" stroke="#3b3a39" stroke-width="1.1"/></svg>
<div class="t" style="left:1841px;top:166.5px;width:100px;height:14px;line-height:14px;text-align:center;font-size:12px;font-weight:bold;color:#252423;transform:rotate(90deg)">Visualizations</div>
<div class="t" style="left:1912.5px;top:111.6px;font-size:12.6px;color:#252423;letter-spacing:0px;-webkit-text-stroke:0.45px #252423">Fields</div>
<svg class="a" style="left:2034px;top:112.5px" width="11" height="10" viewBox="0 0 11 10"><path d="M1 1 L5 5 L1 9 M5.5 1 L9.5 5 L5.5 9" fill="none" stroke="#3b3a39" stroke-width="1.1"/></svg>
<div class="a" style="left:1909px;top:138.5px;width:138.5px;height:21px;background:#fff;border:1px solid #6a6866"></div>
<svg class="a" style="left:1914px;top:142px" width="13" height="13" viewBox="0 0 13 13"><circle cx="8" cy="5" r="3.8" fill="none" stroke="#605e5c" stroke-width="1.1"/><path d="M5.3 7.7 L1 12" stroke="#605e5c" stroke-width="1.1"/></svg>
<div class="t" style="left:1932.5px;top:144.2px;font-size:11px;color:#605e5c">Search</div>
<svg class="a" style="left:1913px;top:172.5px" width="7" height="10" viewBox="0 0 7 10"><path d="M1 0.8 L5.5 5 L1 9.2" fill="none" stroke="#605e5c" stroke-width="1"/></svg>
<svg class="a" style="left:1923px;top:172.0px" width="12" height="11" viewBox="0 0 12 11" fill="none" stroke="#3b3a39" stroke-width="0.9"><rect x="0.5" y="0.5" width="10.5" height="9.5"/><path d="M0.5 2.6 H11 M0.5 5 H11 M0.5 7.4 H11 M4 0.5 V10 M7.5 0.5 V10" /><path d="M0.5 1.5 H11" stroke-width="1.6"/></svg>
<div class="t" style="left:1939.0px;top:172.9px;font-size:9.6px;color:#3b3a39;letter-spacing:-0.22px">BusinessUnits</div>
<svg class="a" style="left:1913px;top:191.7px" width="7" height="10" viewBox="0 0 7 10"><path d="M1 0.8 L5.5 5 L1 9.2" fill="none" stroke="#605e5c" stroke-width="1"/></svg>
<svg class="a" style="left:1923px;top:190.2px" width="14" height="13" viewBox="0 0 14 13" fill="none" stroke="#3b3a39" stroke-width="0.9"><rect x="0.5" y="0.5" width="9" height="7.5"/><path d="M0.5 2.8 H9.5 M0.5 5.4 H6 M3.5 0.5 V8 M6.5 0.5 V4"/><rect x="6" y="5" width="7" height="7" fill="#f0f0f0"/><path d="M6 7 H13 M8 9 H9 M10 9 H11"/></svg>
<div class="t" style="left:1939.0px;top:192.1px;font-size:9.6px;color:#3b3a39;letter-spacing:-0.22px">Calendar</div>
<svg class="a" style="left:1913px;top:211.0px" width="7" height="10" viewBox="0 0 7 10"><path d="M1 0.8 L5.5 5 L1 9.2" fill="none" stroke="#605e5c" stroke-width="1"/></svg>
<svg class="a" style="left:1923px;top:210.5px" width="12" height="11" viewBox="0 0 12 11" fill="none" stroke="#3b3a39" stroke-width="0.9"><rect x="0.5" y="0.5" width="10.5" height="9.5"/><path d="M0.5 2.6 H11 M0.5 5 H11 M0.5 7.4 H11 M4 0.5 V10 M7.5 0.5 V10" /><path d="M0.5 1.5 H11" stroke-width="1.6"/></svg>
<div class="t" style="left:1939.0px;top:211.3px;font-size:9.6px;color:#3b3a39;letter-spacing:-0.22px">Comments</div>
<svg class="a" style="left:1913px;top:230.2px" width="7" height="10" viewBox="0 0 7 10"><path d="M1 0.8 L5.5 5 L1 9.2" fill="none" stroke="#605e5c" stroke-width="1"/></svg>
<svg class="a" style="left:1923px;top:229.7px" width="12" height="11" viewBox="0 0 12 11" fill="none" stroke="#3b3a39" stroke-width="0.9"><rect x="0.5" y="0.5" width="10.5" height="9.5"/><path d="M0.5 2.6 H11 M0.5 5 H11 M0.5 7.4 H11 M4 0.5 V10 M7.5 0.5 V10" /><path d="M0.5 1.5 H11" stroke-width="1.6"/></svg>
<div class="t" style="left:1939.0px;top:230.6px;font-size:9.6px;color:#3b3a39;letter-spacing:-0.22px">Customers</div>
<svg class="a" style="left:1913px;top:249.4px" width="7" height="10" viewBox="0 0 7 10"><path d="M1 0.8 L5.5 5 L1 9.2" fill="none" stroke="#605e5c" stroke-width="1"/></svg>
<svg class="a" style="left:1923px;top:248.9px" width="12" height="11" viewBox="0 0 12 11" fill="none" stroke="#3b3a39" stroke-width="0.9"><rect x="0.5" y="0.5" width="10.5" height="9.5"/><path d="M0.5 2.6 H11 M0.5 5 H11 M0.5 7.4 H11 M4 0.5 V10 M7.5 0.5 V10" /><path d="M0.5 1.5 H11" stroke-width="1.6"/></svg>
<div class="t" style="left:1939.0px;top:249.8px;font-size:9.6px;color:#3b3a39;letter-spacing:-0.22px">DQ_BusinessUnits</div>
<svg class="a" style="left:1913px;top:268.6px" width="7" height="10" viewBox="0 0 7 10"><path d="M1 0.8 L5.5 5 L1 9.2" fill="none" stroke="#605e5c" stroke-width="1"/></svg>
<svg class="a" style="left:1923px;top:268.1px" width="12" height="11" viewBox="0 0 12 11" fill="none" stroke="#3b3a39" stroke-width="0.9"><rect x="0.5" y="0.5" width="10.5" height="9.5"/><path d="M0.5 2.6 H11 M0.5 5 H11 M0.5 7.4 H11 M4 0.5 V10 M7.5 0.5 V10" /><path d="M0.5 1.5 H11" stroke-width="1.6"/></svg>
<div class="t" style="left:1939.0px;top:269.0px;font-size:9.6px;color:#3b3a39;letter-spacing:-0.22px">DQ_Customers</div>
<svg class="a" style="left:1913px;top:287.9px" width="7" height="10" viewBox="0 0 7 10"><path d="M1 0.8 L5.5 5 L1 9.2" fill="none" stroke="#605e5c" stroke-width="1"/></svg>
<svg class="a" style="left:1923px;top:287.4px" width="12" height="11" viewBox="0 0 12 11" fill="none" stroke="#3b3a39" stroke-width="0.9"><rect x="0.5" y="0.5" width="10.5" height="9.5"/><path d="M0.5 2.6 H11 M0.5 5 H11 M0.5 7.4 H11 M4 0.5 V10 M7.5 0.5 V10" /><path d="M0.5 1.5 H11" stroke-width="1.6"/></svg>
<div class="t" style="left:1939.0px;top:288.3px;font-size:9.6px;color:#3b3a39;letter-spacing:-0.22px">DQ_Products</div>
<svg class="a" style="left:1913px;top:307.1px" width="7" height="10" viewBox="0 0 7 10"><path d="M1 0.8 L5.5 5 L1 9.2" fill="none" stroke="#605e5c" stroke-width="1"/></svg>
<svg class="a" style="left:1923px;top:306.6px" width="12" height="11" viewBox="0 0 12 11" fill="none" stroke="#3b3a39" stroke-width="0.9"><rect x="0.5" y="0.5" width="10.5" height="9.5"/><path d="M0.5 2.6 H11 M0.5 5 H11 M0.5 7.4 H11 M4 0.5 V10 M7.5 0.5 V10" /><path d="M0.5 1.5 H11" stroke-width="1.6"/></svg>
<div class="t" style="left:1939.0px;top:307.5px;font-size:9.6px;color:#3b3a39;letter-spacing:-0.22px">DQ_Sales</div>
<svg class="a" style="left:1913px;top:326.3px" width="7" height="10" viewBox="0 0 7 10"><path d="M1 0.8 L5.5 5 L1 9.2" fill="none" stroke="#605e5c" stroke-width="1"/></svg>
<svg class="a" style="left:1923px;top:325.8px" width="12" height="11" viewBox="0 0 12 11" fill="none" stroke="#3b3a39" stroke-width="0.9"><rect x="0.5" y="0.5" width="10.5" height="9.5"/><path d="M0.5 2.6 H11 M0.5 5 H11 M0.5 7.4 H11 M4 0.5 V10 M7.5 0.5 V10" /><path d="M0.5 1.5 H11" stroke-width="1.6"/></svg>
<div class="t" style="left:1939.0px;top:326.7px;font-size:9.6px;color:#3b3a39;letter-spacing:-0.22px">Flat Sales</div>
<svg class="a" style="left:1913px;top:345.6px" width="7" height="10" viewBox="0 0 7 10"><path d="M1 0.8 L5.5 5 L1 9.2" fill="none" stroke="#605e5c" stroke-width="1"/></svg>
<svg class="a" style="left:1923px;top:345.1px" width="12" height="11" viewBox="0 0 12 11" fill="none" stroke="#3b3a39" stroke-width="0.9"><rect x="0.5" y="0.5" width="10.5" height="9.5"/><path d="M0.5 2.6 H11 M0.5 5 H11 M0.5 7.4 H11 M4 0.5 V10 M7.5 0.5 V10" /><path d="M0.5 1.5 H11" stroke-width="1.6"/></svg>
<div class="t" style="left:1939.0px;top:345.9px;font-size:9.6px;color:#3b3a39;letter-spacing:-0.22px">KPIs</div>
<svg class="a" style="left:1913px;top:364.8px" width="7" height="10" viewBox="0 0 7 10"><path d="M1 0.8 L5.5 5 L1 9.2" fill="none" stroke="#605e5c" stroke-width="1"/></svg>
<svg class="a" style="left:1923px;top:364.3px" width="12" height="11" viewBox="0 0 12 11" fill="none" stroke="#3b3a39" stroke-width="0.9"><rect x="0.5" y="0.5" width="10.5" height="9.5"/><path d="M0.5 2.6 H11 M0.5 5 H11 M0.5 7.4 H11 M4 0.5 V10 M7.5 0.5 V10" /><path d="M0.5 1.5 H11" stroke-width="1.6"/></svg>
<div class="t" style="left:1939.0px;top:365.2px;font-size:9.6px;color:#3b3a39;letter-spacing:-0.22px">Period Calculation</div>
<svg class="a" style="left:1913px;top:384.0px" width="7" height="10" viewBox="0 0 7 10"><path d="M1 0.8 L5.5 5 L1 9.2" fill="none" stroke="#605e5c" stroke-width="1"/></svg>
<svg class="a" style="left:1923px;top:383.5px" width="12" height="11" viewBox="0 0 12 11" fill="none" stroke="#3b3a39" stroke-width="0.9"><rect x="0.5" y="0.5" width="10.5" height="9.5"/><path d="M0.5 2.6 H11 M0.5 5 H11 M0.5 7.4 H11 M4 0.5 V10 M7.5 0.5 V10" /><path d="M0.5 1.5 H11" stroke-width="1.6"/></svg>
<div class="t" style="left:1939.0px;top:384.4px;font-size:9.6px;color:#3b3a39;letter-spacing:-0.22px">Products</div>
<svg class="a" style="left:1913px;top:403.3px" width="7" height="10" viewBox="0 0 7 10"><path d="M1 0.8 L5.5 5 L1 9.2" fill="none" stroke="#605e5c" stroke-width="1"/></svg>
<svg class="a" style="left:1923px;top:402.8px" width="12" height="11" viewBox="0 0 12 11" fill="none" stroke="#3b3a39" stroke-width="0.9"><rect x="0.5" y="0.5" width="10.5" height="9.5"/><path d="M0.5 2.6 H11 M0.5 5 H11 M0.5 7.4 H11 M4 0.5 V10 M7.5 0.5 V10" /><path d="M0.5 1.5 H11" stroke-width="1.6"/></svg>
<div class="t" style="left:1939.0px;top:403.6px;font-size:9.6px;color:#3b3a39;letter-spacing:-0.22px">Sales</div>
<svg class="a" style="left:1913px;top:422.5px" width="7" height="10" viewBox="0 0 7 10"><path d="M1 0.8 L5.5 5 L1 9.2" fill="none" stroke="#605e5c" stroke-width="1"/></svg>
<svg class="a" style="left:1923px;top:422.0px" width="12" height="11" viewBox="0 0 12 11" fill="none" stroke="#3b3a39" stroke-width="0.9"><rect x="0.5" y="0.5" width="10.5" height="9.5"/><path d="M0.5 2.6 H11 M0.5 5 H11 M0.5 7.4 H11 M4 0.5 V10 M7.5 0.5 V10" /><path d="M0.5 1.5 H11" stroke-width="1.6"/></svg>
<div class="t" style="left:1939.0px;top:422.9px;font-size:9.6px;color:#3b3a39;letter-spacing:-0.22px">Salespersons</div>
<div class="a" style="left:31px;top:1048px;width:1484px;height:1px;background:#e6e4e2"></div>
<svg class="a" style="left:35px;top:1059px" width="6" height="8" viewBox="0 0 6 8"><path d="M4.5 0.8 L1.2 4 L4.5 7.2" fill="none" stroke="#c0bebc" stroke-width="1.1"/></svg>
<svg class="a" style="left:51px;top:1059px" width="6" height="8" viewBox="0 0 6 8"><path d="M1.5 0.8 L4.8 4 L1.5 7.2" fill="none" stroke="#c0bebc" stroke-width="1.1"/></svg>
<div class="a" style="left:61.5px;top:1049px;width:1px;height:27px;background:#d6d0c8"></div>
<div class="t" style="left:-108.5px;top:1057.9px;font-size:9.6px;color:#4a4846;letter-spacing:-0.1px;width:400px;text-align:center">Home</div>
<div class="a" style="left:119.5px;top:1049px;width:1px;height:27px;background:#d6d0c8"></div>
<div class="a" style="left:120.5px;top:1048px;width:84.5px;height:28px;background:#fff"></div>
<div class="a" style="left:120.5px;top:1074px;width:84.5px;height:2.5px;background:#c8964b"></div>
<div class="t" style="left:-37.2px;top:1057.9px;font-size:9.6px;color:#252423;letter-spacing:-0.1px;width:400px;text-align:center">Slow report</div>
<div class="a" style="left:204px;top:1049px;width:1px;height:27px;background:#d6d0c8"></div>
<div class="t" style="left:38.2px;top:1057.9px;font-size:9.6px;color:#4a4846;letter-spacing:-0.1px;width:400px;text-align:center">Landing</div>
<div class="a" style="left:270.5px;top:1049px;width:1px;height:27px;background:#d6d0c8"></div>
<div class="t" style="left:107.0px;top:1057.9px;font-size:9.6px;color:#4a4846;letter-spacing:-0.1px;width:400px;text-align:center">Redesign</div>
<div class="a" style="left:341.5px;top:1049px;width:1px;height:27px;background:#d6d0c8"></div>
<div class="t" style="left:166.5px;top:1057.9px;font-size:9.6px;color:#4a4846;letter-spacing:-0.1px;width:400px;text-align:center">Flat</div>
<div class="a" style="left:389.5px;top:1049px;width:1px;height:27px;background:#d6d0c8"></div>
<div class="t" style="left:234.2px;top:1057.9px;font-size:9.6px;color:#4a4846;letter-spacing:-0.1px;width:400px;text-align:center">Star - Import</div>
<div class="a" style="left:477px;top:1049px;width:1px;height:27px;background:#d6d0c8"></div>
<div class="t" style="left:332.8px;top:1057.9px;font-size:9.6px;color:#4a4846;letter-spacing:-0.1px;width:400px;text-align:center">Star - DirectQuery</div>
<div class="a" style="left:586.5px;top:1049px;width:1px;height:27px;background:#d6d0c8"></div>
<div class="t" style="left:422.2px;top:1057.9px;font-size:9.6px;color:#4a4846;letter-spacing:-0.1px;width:400px;text-align:center">Table 6.0</div>
<div class="a" style="left:656px;top:1049px;width:1px;height:27px;background:#d6d0c8"></div>
<div class="t" style="left:496.2px;top:1057.9px;font-size:9.6px;color:#4a4846;letter-spacing:-0.1px;width:400px;text-align:center">cross table</div>
<div class="a" style="left:734.5px;top:1049px;width:1px;height:27px;background:#d6d0c8"></div>
<div class="t" style="left:586.0px;top:1057.9px;font-size:9.6px;color:#4a4846;letter-spacing:-0.1px;width:400px;text-align:center">by BU, multiples</div>
<div class="a" style="left:835.5px;top:1049px;width:1px;height:27px;background:#d6d0c8"></div>
<div class="t" style="left:696.8px;top:1057.9px;font-size:9.6px;color:#4a4846;letter-spacing:-0.1px;width:400px;text-align:center">by Product multiples</div>
<div class="a" style="left:956px;top:1049px;width:1px;height:27px;background:#d6d0c8"></div>
<div class="t" style="left:815.2px;top:1057.9px;font-size:9.6px;color:#4a4846;letter-spacing:-0.1px;width:400px;text-align:center">by Country (top 20)</div>
<div class="a" style="left:1072.5px;top:1049px;width:1px;height:27px;background:#d6d0c8"></div>
<svg class="a" style="left:1082.5px;top:1058.5px" width="11" height="9" viewBox="0 0 11 9" fill="none" stroke="#8a8886" stroke-width="0.9"><path d="M0.8 5 C2.5 2 8.5 2 10.2 5 M4 5.5 A1.6 1.6 0 0 0 7 5.5 M1.5 1 L9.5 8.5"/></svg>
<div class="t" style="left:931.0px;top:1057.9px;font-size:9.6px;color:#4a4846;letter-spacing:-0.1px;width:400px;text-align:center">by Country (drill)</div>
<div class="a" style="left:1175.5px;top:1049px;width:1px;height:27px;background:#d6d0c8"></div>
<svg class="a" style="left:1185.5px;top:1058.5px" width="11" height="9" viewBox="0 0 11 9" fill="none" stroke="#8a8886" stroke-width="0.9"><path d="M0.8 5 C2.5 2 8.5 2 10.2 5 M4 5.5 A1.6 1.6 0 0 0 7 5.5 M1.5 1 L9.5 8.5"/></svg>
<div class="t" style="left:1013.5px;top:1057.9px;font-size:9.6px;color:#4a4846;letter-spacing:-0.1px;width:400px;text-align:center">Tooltip</div>
<div class="a" style="left:1237.5px;top:1049px;width:1px;height:27px;background:#d6d0c8"></div>
<div class="t" style="left:1078.0px;top:1057.9px;font-size:9.6px;color:#4a4846;letter-spacing:-0.1px;width:400px;text-align:center">by Product</div>
<div class="a" style="left:1316.5px;top:1049px;width:1px;height:27px;background:#d6d0c8"></div>
<div class="t" style="left:1161.2px;top:1057.9px;font-size:9.6px;color:#4a4846;letter-spacing:-0.1px;width:400px;text-align:center">Template PIC</div>
<div class="a" style="left:1404px;top:1049px;width:1px;height:27px;background:#d6d0c8"></div>
<div class="a" style="left:0px;top:1076px;width:2048px;height:1px;background:#e8e6e4"></div>
<div class="a" style="left:1406px;top:1050px;width:32px;height:25.5px;background:#d0a46c"></div>
<svg class="a" style="left:1418.5px;top:1059px" width="8" height="8" viewBox="0 0 8 8"><path d="M4 0.3 V7.7 M0.3 4 H7.7" stroke="#4a5a48" stroke-width="1.3"/></svg>
<div class="t" style="left:2.0px;top:1082.2px;font-size:9.6px;color:#4a4846;letter-spacing:-0.1px">Page 2 of 16</div>
<div class="t" style="left:1768.5px;top:1082.2px;font-size:9.6px;color:#4a4846;letter-spacing:-0.1px">Storage Mode: Mixed</div>
<div class="a" style="left:1873px;top:1086px;width:4px;height:1px;background:#4a4846"></div>
<div class="a" style="left:1880px;top:1086px;width:80px;height:1px;background:#6a6866"></div>
<div class="a" style="left:1926px;top:1081.5px;width:2px;height:9px;background:#3b3a39"></div>
<svg class="a" style="left:1965px;top:1083px" width="7" height="7" viewBox="0 0 7 7"><path d="M3.5 0.5 V6.5 M0.5 3.5 H6.5" stroke="#4a4846" stroke-width="1"/></svg>
<div class="t" style="left:1983.0px;top:1082.2px;font-size:9.6px;color:#6a6866;letter-spacing:-0.1px">145%</div>
<svg class="a" style="left:2023.5px;top:1082.5px" width="14" height="11" viewBox="0 0 14 11" fill="none" stroke="#5a5856" stroke-width="1"><rect x="0.5" y="0.5" width="13" height="10"/><path d="M2.5 4 V2.5 H4 M10 2.5 H11.5 V4 M11.5 7 V8.5 H10 M4 8.5 H2.5 V7" stroke-width="0.9"/></svg>
</body>
</html>
